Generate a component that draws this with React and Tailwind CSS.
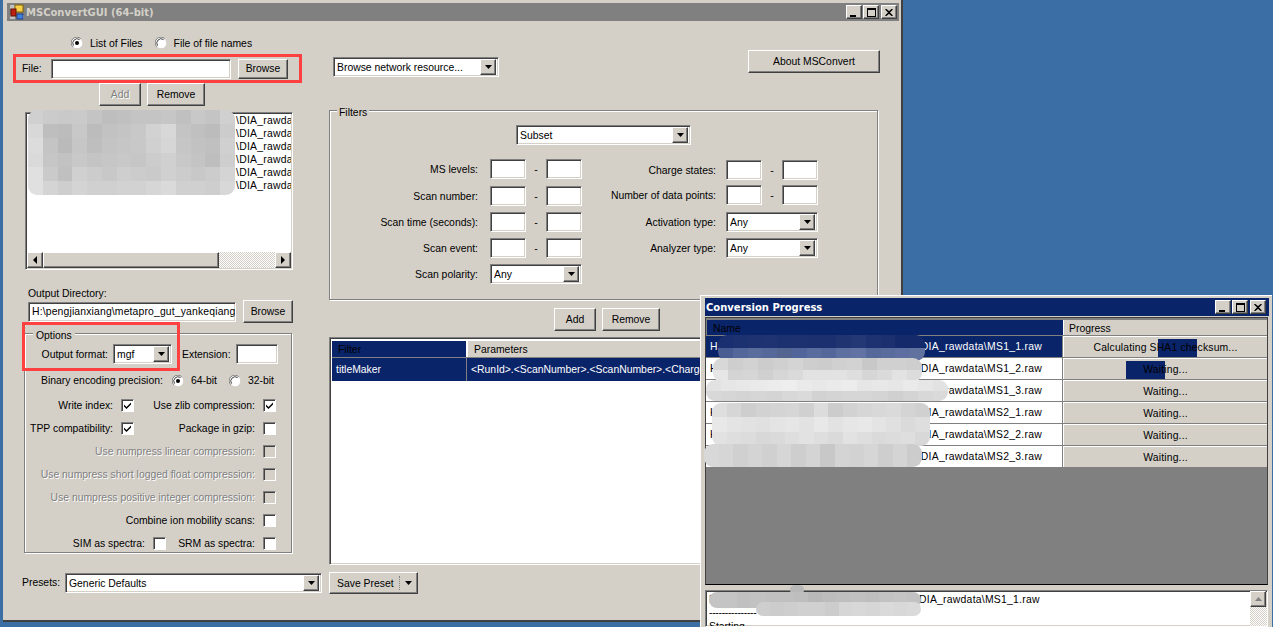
import React from "react";

const raised = "border border-t-white border-l-white border-r-[#404040] border-b-[#404040] bg-[#d4d0c8] shadow-[inset_-1px_-1px_0_#808080]";
const sunken = "border border-t-[#808080] border-l-[#808080] border-r-white border-b-white bg-white shadow-[inset_1px_1px_0_#404040,inset_-1px_-1px_0_#d4d0c8]";
const sunkenFlat = "border border-t-[#808080] border-l-[#808080] border-r-white border-b-white shadow-[inset_1px_1px_0_#404040]";
const etched = "border border-[#808080] shadow-[inset_1px_1px_0_#fff,1px_1px_0_#fff]";
const checker = "bg-[image:repeating-conic-gradient(#d4d0c8_0_25%,#fff_0_50%)] bg-[length:2px_2px]";

function Arrow({ dir = "down", color = "#000" }) {
  const pts = { down: "0,0 7,0 3.5,4", left: "4,0 4,8 0,4", right: "0,0 0,8 4,4", up: "0,4 7,4 3.5,0" }[dir];
  const big = dir === "left" || dir === "right";
  return (
    <svg width={big ? 4 : 7} height={big ? 8 : 4} viewBox={big ? "0 0 4 8" : "0 0 7 4"} className="shrink-0">
      <polygon points={pts} fill={color} />
    </svg>
  );
}

function Btn({ className = "", disabled, children }) {
  return (
    <div className={`${raised} flex shrink-0 items-center justify-center ${disabled ? "text-[#808080] [text-shadow:1px_1px_0_#fff]" : ""} ${className}`}>
      {children}
    </div>
  );
}

function Combo({ className = "", text }) {
  return (
    <div className={`${sunken} flex shrink-0 items-center pl-[3px] pr-[2px] ${className}`}>
      <span className="flex-1 truncate pt-[1px]">{text}</span>
      <div className={`${raised} flex h-[16px] w-[16px] shrink-0 items-center justify-center`}>
        <Arrow />
      </div>
    </div>
  );
}

function Input({ className = "", children }) {
  return <div className={`${sunken} shrink-0 overflow-hidden whitespace-nowrap pl-[3px] leading-[17px] ${className}`}>{children}</div>;
}

function Radio({ on }) {
  return (
    <svg width="12" height="12" viewBox="0 0 12 12" className="shrink-0">
      <circle cx="6" cy="6" r="5.5" fill="#fff" />
      <path d="M1.8 9.8A5.5 5.5 0 0 1 9.8 1.8" fill="none" stroke="#808080" />
      <path d="M2.6 8.6A4.3 4.3 0 0 1 8.6 2.6" fill="none" stroke="#404040" />
      <path d="M10.2 2.2A5.5 5.5 0 0 1 2.2 10.2" fill="none" stroke="#d4d0c8" />
      {on && <circle cx="6" cy="6" r="2" fill="#000" />}
    </svg>
  );
}

function Check({ on, disabled }) {
  return (
    <div className={`${sunkenFlat} flex h-[13px] w-[13px] shrink-0 items-center justify-center ${disabled ? "bg-[#d4d0c8]" : "bg-white"}`}>
      {on && (
        <svg width="9" height="9" viewBox="0 0 9 9">
          <path d="M1 3.5L3.5 6L8 1.5V3.5L3.5 8L1 5.5Z" fill="#000" />
        </svg>
      )}
    </div>
  );
}

function Mosaic({ className, rows }) {
  return (
    <div className={`absolute flex flex-col overflow-hidden rounded-[9px] ${className}`}>
      {rows.map((row, i) => (
        <div key={i} className="flex flex-1">
          {row.map((v, j) => (
            <div key={j} className="flex-1" style={{ background: typeof v === "string" ? v : `rgb(${v},${v},${v})` }} />
          ))}
        </div>
      ))}
    </div>
  );
}

function WinBtns() {
  return (
    <div className="flex gap-[1px]">
      <Btn className="h-[14px] w-[16px] items-end pb-[1px] pr-[3px]"><div className="h-[2px] w-[6px] bg-black" /></Btn>
      <Btn className="h-[14px] w-[16px]"><div className="h-[9px] w-[9px] border border-t-2 border-black" /></Btn>
      <Btn className="ml-[1px] h-[14px] w-[16px]">
        <svg width="8" height="7" viewBox="0 0 8 7"><path d="M0.5 0L4 3L7.5 0M0.5 7L4 4L7.5 7M1 0.5L7 6.5M7 0.5L1 6.5" stroke="#000" strokeWidth="1.3" fill="none" /></svg>
      </Btn>
    </div>
  );
}

function Range() {
  return (
    <>
      <Input className="h-[20px] w-[36px]" />
      <span className="w-[20px] shrink-0 text-center">-</span>
      <Input className="h-[20px] w-[36px]" />
    </>
  );
}

function LRow({ label, className = "", children }) {
  return (
    <div className={`flex h-[20px] items-center ${className}`}>
      <span className="w-[148px] shrink-0 text-right">{label}</span>
      <div className="ml-[12px] flex items-center">{children}</div>
    </div>
  );
}

function RRow({ label, className = "", children }) {
  return (
    <div className={`flex h-[20px] items-center ${className}`}>
      <span className="w-[116px] shrink-0 text-right">{label}</span>
      <div className="ml-[10px] flex items-center">{children}</div>
    </div>
  );
}

function OptRow({ label, on, disabled, left }) {
  return (
    <div className="flex h-[23px] items-center">
      {left ? (
        <div className="flex w-[109px] shrink-0 items-center justify-end gap-[8px] whitespace-nowrap">
          <span>{left.label}</span>
          <Check on={left.on} />
        </div>
      ) : null}
      <div className={`ml-auto flex items-center gap-[8px] whitespace-nowrap pr-[15px] ${disabled ? "text-[#808080] [text-shadow:1px_1px_0_#fff]" : ""}`}>
        <span>{label}</span>
        <Check on={on} disabled={disabled} />
      </div>
    </div>
  );
}

function ListRow({ last }) {
  return (
    <div className="flex h-[13px] items-center overflow-hidden whitespace-nowrap tracking-[0.25px]">
      <span className="w-[207px] shrink-0 overflow-hidden">H</span>
      <span>\DIA_rawdata\{last}</span>
    </div>
  );
}

function ProgRow({ sel, last, prog, barClass }) {
  return (
    <div className="flex h-[22px] border-b border-b-[#808080]">
      <div className={`flex w-[357px] shrink-0 items-center justify-between border-r border-r-[#808080] pl-[4px] pr-[20px] tracking-[0.27px] ${sel ? "bg-[#0a246a] text-white" : "bg-white"}`}>
        <span>H</span>
        <span>DIA_rawdata\{last}</span>
      </div>
      <div className="relative flex flex-1 items-center justify-center border-t border-l border-t-white border-l-white bg-[#d4d0c8]">
        {barClass && <div className={`absolute top-[2px] h-[18px] w-[39px] bg-[#0a246a] ${barClass}`} />}
        <span className="relative tracking-[0.15px]">{prog}</span>
      </div>
    </div>
  );
}

const font = "font-['Liberation_Sans',Arial,sans-serif]";

export default function App() {
  return (
    <div className={`relative h-[627px] w-[1273px] overflow-hidden bg-[#3a6ea5] text-[10.4px] leading-[13px] text-black ${font}`}>
      {/* main window */}
      <div className="absolute left-[3px] top-[-1px] flex h-[623px] w-[900px] flex-col border-r-2 border-b-2 border-r-[#404040] border-b-[#404040] bg-[#d4d0c8] pl-[4px] pr-[2px] pt-[4px]">
        <div className="flex h-[18px] shrink-0 items-center bg-[#808080] pl-[2px] pr-[2px]">
          <svg width="16" height="16" viewBox="0 0 16 16" className="shrink-0">
            <rect x="0" y="0" width="16" height="16" fill="#808080" />
            <path d="M1 1h5v4H1zM1 11h5v4H1zM11 11h4v4h-4z" fill="#c0c0c0" />
            <rect x="6" y="1" width="8" height="7" fill="#f8d048" stroke="#806000" />
            <rect x="2" y="5" width="5" height="7" fill="#c02010" stroke="#601000" />
            <rect x="8" y="10" width="6" height="5" fill="#4080e0" stroke="#204080" />
          </svg>
          <span className="ml-[1px] flex-1 font-['DejaVu_Sans',sans-serif] text-[10px] font-bold text-[#d4d0c8]">MSConvertGUI (64-bit)</span>
          <WinBtns />
        </div>
        <div className="flex min-h-0 flex-1">
          {/* left column */}
          <div className="flex w-[322px] shrink-0 flex-col">
            <div className="ml-[64px] mt-[15px] flex h-[14px] items-center">
              <Radio on />
              <span className="ml-[7px]">List of Files</span>
              <div className="ml-[12px]"><Radio /></div>
              <span className="ml-[7px]">File of file names</span>
            </div>
            <div className="ml-[6px] mt-[4px] flex h-[29px] w-[289px] items-center border-[3px] border-[#ff4040] pl-[6px]">
              <span className="w-[29px] shrink-0">File:</span>
              <Input className="h-[20px] w-[180px]" />
              <Btn className="ml-[7px] h-[20px] w-[50px]">Browse</Btn>
            </div>
            <div className="ml-[92px] flex">
              <Btn disabled className="h-[23px] w-[42px]">Add</Btn>
              <Btn className="ml-[6px] h-[23px] w-[58px]">Remove</Btn>
            </div>
            <div className={`${sunken} relative ml-[18px] mt-[6px] flex h-[158px] w-[268px] shrink-0 flex-col overflow-hidden`}>
              <div className="min-w-0 flex-1 pl-[3px] pr-[1px] pt-[1px]">
                <ListRow last="MS1_1.raw" />
                <ListRow last="MS1_2.raw" />
                <ListRow last="MS1_3.raw" />
                <ListRow last="MS2_1.raw" />
                <ListRow last="MS2_2.raw" />
                <ListRow last="MS2_3.raw" />
              </div>
              <div className="mb-[1px] ml-[1px] flex h-[16px] shrink-0">
                <Btn className="h-[16px] w-[16px]"><Arrow dir="left" /></Btn>
                <div className={`${raised} h-[16px] w-[176px]`} />
                <div className={`h-[16px] flex-1 ${checker}`} />
                <Btn className="mr-[1px] h-[16px] w-[16px]"><Arrow dir="right" /></Btn>
              </div>
            </div>
            <div className="ml-[21px] mt-[17px] h-[13px] whitespace-nowrap">Output Directory:</div>
            <div className="ml-[21px] flex h-[23px] items-center">
              <Input className="h-[20px] w-[208px] tracking-[0.15px]">H:\pengjianxiang\metapro_gut_yankeqiang</Input>
              <Btn className="ml-[7px] h-[23px] w-[50px]">Browse</Btn>
            </div>
            <div className={`${etched} relative ml-[17px] mt-[10px] h-[220px] w-[268px] shrink-0`}>
              <span className="absolute left-[8px] top-[-5px] bg-[#d4d0c8] px-[3px]">Options</span>
              <div className="pointer-events-none absolute left-[-3px] top-[-12px] h-[49px] w-[158px] border-[3px] border-[#ff4040]" />
              <div className="mt-[10px] flex h-[20px] items-center">
                <span className="w-[83px] shrink-0 text-right">Output format:</span>
                <Combo className="ml-[5px] h-[20px] w-[59px]" text="mgf" />
                <span className="ml-[10px] w-[49px] shrink-0">Extension:</span>
                <Input className="ml-[5px] h-[20px] w-[42px]" />
              </div>
              <div className="mt-[5px] flex h-[23px] items-center pl-[16px]">
                <span className="w-[122px] shrink-0 whitespace-nowrap">Binary encoding precision:</span>
                <div className="ml-[9px]"><Radio on /></div>
                <span className="ml-[7px]">64-bit</span>
                <div className="ml-[12px]"><Radio /></div>
                <span className="ml-[7px]">32-bit</span>
              </div>
              <div className="mt-[2px]">
                <OptRow left={{ label: "Write index:", on: true }} label="Use zlib compression:" on />
                <OptRow left={{ label: "TPP compatibility:", on: true }} label="Package in gzip:" />
                <OptRow label="Use numpress linear compression:" disabled />
                <OptRow label="Use numpress short logged float compression:" disabled />
                <OptRow label="Use numpress positive integer compression:" disabled />
                <OptRow label="Combine ion mobility scans:" />
                <div className="flex h-[23px] items-center">
                  <div className="flex w-[141px] shrink-0 items-center justify-end gap-[8px] whitespace-nowrap">
                    <span>SIM as spectra:</span>
                    <Check />
                  </div>
                  <div className="ml-auto flex items-center gap-[8px] pr-[15px]">
                    <span>SRM as spectra:</span>
                    <Check />
                  </div>
                </div>
              </div>
            </div>
            <div className="ml-[15px] mt-[20px] flex h-[19px] items-center">
              <span className="w-[43px] shrink-0">Presets:</span>
              <Combo className="h-[20px] w-[257px]" text="Generic Defaults" />
            </div>
          </div>

          {/* right column */}
          <div className="flex min-w-0 flex-1 flex-col pr-[19px]">
            <div className="mt-[29px] flex h-[27px] shrink-0 items-start">
              <Combo className="ml-[4px] mt-[7px] h-[20px] w-[166px]" text="Browse network resource..." />
              <Btn className="ml-auto h-[23px] w-[132px]">About MSConvert</Btn>
            </div>
            <div className={`${etched} relative mt-[33px] h-[190px] w-[549px] shrink-0 pt-[14px]`}>
              <span className="absolute left-[7px] top-[-5px] bg-[#d4d0c8] px-[2px]">Filters</span>
              <Combo className="mx-auto h-[20px] w-[175px]" text="Subset" />
              <div className="mt-[14px] flex">
                <div className="flex w-[252px] shrink-0 flex-col">
                  <LRow label="MS levels:"><Range /></LRow>
                  <LRow label="Scan number:" className="mt-[7px]"><Range /></LRow>
                  <LRow label="Scan time (seconds):" className="mt-[6px]"><Range /></LRow>
                  <LRow label="Scan event:" className="mt-[6px]"><Range /></LRow>
                  <LRow label="Scan polarity:" className="mt-[6px]"><Combo className="h-[20px] w-[92px]" text="Any" /></LRow>
                </div>
                <div className="ml-[18px] flex flex-col">
                  <RRow label="Charge states:" className="mt-[1px]"><Range /></RRow>
                  <RRow label="Number of data points:" className="mt-[5px]"><Range /></RRow>
                  <RRow label="Activation type:" className="mt-[7px]"><Combo className="h-[20px] w-[92px]" text="Any" /></RRow>
                  <RRow label="Analyzer type:" className="mt-[6px]"><Combo className="h-[20px] w-[92px]" text="Any" /></RRow>
                </div>
              </div>
            </div>
            <div className="ml-[225px] mt-[8px] flex h-[22px] shrink-0">
              <Btn className="h-[23px] w-[42px]">Add</Btn>
              <Btn className="ml-[6px] h-[23px] w-[58px]">Remove</Btn>
            </div>
            <div className={`${sunken} mt-[7px] h-[228px] w-[549px] shrink-0 overflow-hidden pl-[2px] pt-[3px]`}>
              <div className="flex h-[16px]">
                <div className="flex w-[135px] shrink-0 items-center border-r border-r-white bg-[#0a246a] pl-[6px]">Filter</div>
                <div className="flex flex-1 items-center border-l border-l-white bg-[#d4d0c8] pl-[6px]">Parameters</div>
              </div>
              <div className="flex h-[24px] border-t border-t-[#808080] bg-[#0a246a] text-white">
                <div className="flex w-[135px] shrink-0 items-center border-r border-r-[#808080] pl-[4px]">titleMaker</div>
                <div className="flex flex-1 items-center whitespace-nowrap pl-[4px]">&lt;RunId&gt;.&lt;ScanNumber&gt;.&lt;ScanNumber&gt;.&lt;ChargeState&gt;</div>
              </div>
            </div>
            <div className={`${raised} mt-[7px] flex h-[22px] w-[89px] shrink-0 items-center pl-[7px]`}>
              <span className="w-[62px] shrink-0 whitespace-nowrap">Save Preset</span>
              <span className="h-[14px] border-l border-dotted border-l-[#808080]" />
              <span className="ml-[5px]"><Arrow /></span>
            </div>
          </div>
        </div>
        <Mosaic
          className="left-[25px] top-[111px] h-[85px] w-[207px]"
          rows={[
            [208, 203, 201, 202, 196, 190, 192, 196, 196, 198, 192, 200, 196, 208],
            [216, 190, 188, 200, 188, 194, 196, 200, 210, 216, 196, 192, 188, 204],
            [220, 196, 186, 198, 190, 196, 198, 200, 208, 214, 198, 194, 192, 208],
            [218, 198, 194, 200, 196, 198, 200, 198, 204, 208, 200, 196, 190, 206],
            [224, 202, 192, 208, 204, 200, 206, 204, 202, 208, 204, 200, 204, 212],
            [224, 212, 206, 212, 208, 208, 210, 210, 214, 218, 208, 208, 206, 216],
          ]}
        />
      </div>

      {/* conversion progress window */}
      <div className="absolute left-[700px] top-[295px] flex h-[332px] w-[572px] flex-col overflow-hidden border-t border-l border-t-white border-l-white bg-[#d4d0c8] pl-[4px] pr-[4px] pt-[2px]">
        <div className="-mr-[1px] flex h-[18px] shrink-0 items-center bg-[#0a246a] pl-[1px] pr-[3px]">
          <span className="flex-1 font-['DejaVu_Sans',sans-serif] text-[10px] font-bold text-white">Conversion Progress</span>
          <WinBtns />
        </div>
        <div className="mt-[1px] flex h-[268px] shrink-0 flex-col border border-[#404040] border-b-black bg-[#808080] pt-[2px]">
          <div className="flex h-[16px] shrink-0 border-b border-b-[#808080] pl-[1px]">
            <div className="flex w-[356px] shrink-0 items-center bg-[#0a246a] pl-[6px] pt-[1px]">Name</div>
            <div className="flex flex-1 items-center border-l border-l-white bg-[#d4d0c8] pl-[5px] pt-[1px]">Progress</div>
          </div>
          <ProgRow sel last="MS1_1.raw" prog="Calculating SHA1 checksum..." barClass="left-[94px]" />
          <ProgRow last="MS1_2.raw" prog="Waiting..." barClass="left-[62px]" />
          <ProgRow last="MS1_3.raw" prog="Waiting..." />
          <ProgRow last="MS2_1.raw" prog="Waiting..." />
          <ProgRow last="MS2_2.raw" prog="Waiting..." />
          <ProgRow last="MS2_3.raw" prog="Waiting..." />
        </div>
        <div className={`${sunken} relative mt-[5px] flex min-h-0 flex-1 overflow-hidden`}>
          <div className="flex-1 pl-[3px] pt-[2px]">
            <div className="flex h-[13px] items-center whitespace-nowrap tracking-[0.25px]">
              <span className="w-[210px] shrink-0">H</span>
              <span>DIA_rawdata\MS1_1.raw</span>
            </div>
            <div className="h-[13px] overflow-hidden leading-[13px] tracking-[-0.3px]">---------------</div>
            <div className="mt-[1px] h-[13px]">Starting</div>
          </div>
          <div className="flex w-[17px] shrink-0 flex-col">
            <Btn className="h-[16px] w-[16px]"><Arrow dir="up" color="#808080" /></Btn>
            <div className={`flex-1 ${checker}`} />
          </div>
        </div>
        <Mosaic
          className="left-[17px] top-[39px] h-[26px] w-[207px]"
          rows={[
            ["#1a2f6f", "#1c3170", "#1e3272", "#1f3372", "#1c3170", "#1d3171", "#1c3070", "#1c3070", "#203472", "#243875", "#1e3272", "#1c3070", "#142a6a", "#142a6a"],
            ["#4a5d92", "#54679a", "#5a6c9c", "#56689a", "#52648f", "#52659a", "#5a6c9e", "#54669a", "#5e70a0", "#6272a2", "#56689a", "#5a6c9c", "#5e6ea0", "#62729e"],
          ]}
        />
        <Mosaic
          className="left-[12px] top-[62px] h-[24px] w-[209px]"
          rows={[
            [216, 206, 210, 204, 208, 212, 206, 204, 208, 210, 200, 208, 208, 206],
            [230, 212, 214, 208, 214, 218, 226, 226, 226, 222, 214, 218, 226, 220],
          ]}
        />
        <Mosaic
          className="left-[5px] top-[84px] h-[21px] w-[242px]"
          rows={[
            [226, 230, 232, 234, 236, 238, 234, 232, 234, 236, 230, 232, 230, 234, 230, 226],
            [216, 214, 212, 214, 212, 216, 218, 210, 212, 214, 214, 212, 208, 212, 216, 218],
          ]}
        />
        <Mosaic
          className="left-[11px] top-[107px] h-[43px] w-[218px]"
          rows={[
            [222, 214, 206, 210, 212, 214, 208, 220, 204, 210, 214, 216, 218, 212, 208],
            [232, 228, 226, 224, 228, 230, 226, 232, 226, 230, 232, 228, 224, 218, 222],
            [226, 222, 220, 216, 218, 222, 226, 222, 218, 226, 222, 218, 220, 222, 216],
          ]}
        />
        <Mosaic
          className="left-[3px] top-[148px] h-[23px] w-[218px]"
          rows={[
            [216, 214, 208, 212, 208, 214, 206, 212, 200, 212, 210, 214, 206, 212, 204],
            [216, 214, 208, 212, 208, 214, 206, 212, 200, 212, 210, 214, 206, 212, 204],
          ]}
        />
        <Mosaic className="left-[89px] top-[289px] h-[10px] w-[14px]" rows={[[184]]} />
        <Mosaic
          className="left-[8px] top-[296px] h-[16px] w-[212px]"
          rows={[[196, 196, 192, 194, 192, 192, 190, 184, 188, 190, 192, 190, 194, 196, 194]]}
        />
        <Mosaic
          className="left-[55px] top-[306px] h-[14px] w-[165px]"
          rows={[[206, 204, 206, 208, 208, 204, 214, 216, 214, 218, 216, 218]]}
        />
      </div>
    </div>
  );
}
